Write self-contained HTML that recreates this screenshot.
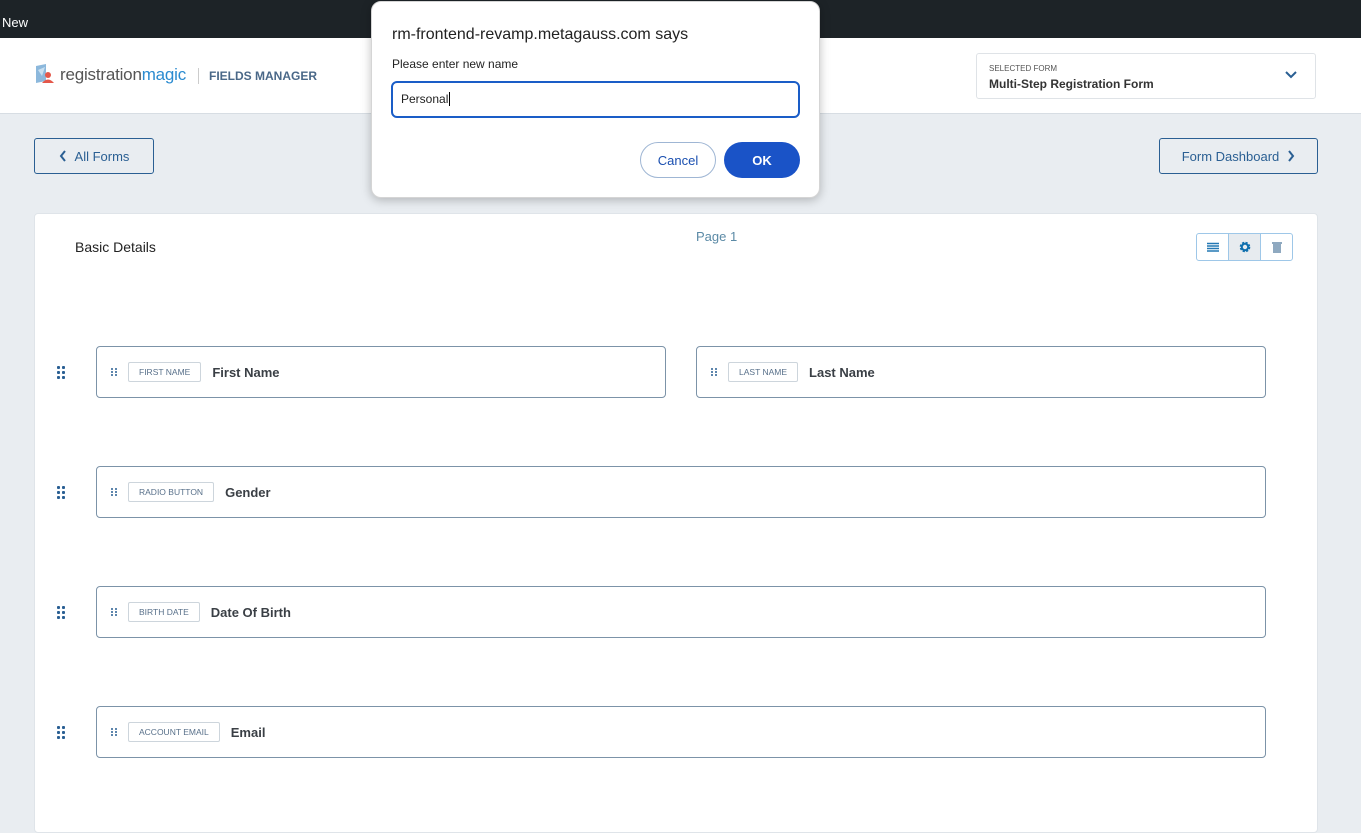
<!DOCTYPE html>
<html><head><style>
*{box-sizing:border-box;margin:0;padding:0}
body{width:1361px;height:797px;overflow:hidden;background:#e9edf1;font-family:"Liberation Sans",Arial,sans-serif;position:relative}
.top{position:absolute;left:0;top:0;width:1361px;height:38px;background:#1d2327;color:#fff;font-size:13px;padding:15px 0 0 2px}
.hdr{position:absolute;left:0;top:38px;width:1361px;height:76px;background:#fff;border-bottom:1px solid #d7dde3}
.btn{position:absolute;height:36px;border:1px solid #2a5f93;border-radius:3px;color:#2a5f93;font-size:13px;display:flex;align-items:center;justify-content:center;gap:8px}
.card{position:absolute;left:34px;top:213px;width:1284px;height:620px;background:#fff;border:1px solid #dfe4e9;border-radius:4px}
.field{position:absolute;height:52px;border:1px solid #7c93a8;border-radius:4px;background:#fff;display:flex;align-items:center}
.tag{border:1px solid #cdd5dc;color:#58708a;font-size:8.5px;height:20px;padding:0 10px;display:flex;align-items:center;margin-left:11px;border-radius:2px}
.fname{font-weight:bold;font-size:13px;color:#3a3f45;margin-left:11px}
.dots{display:grid;grid-template-columns:3px 3px;gap:2px 2px}
.dots i{width:3px;height:3px;background:#2a5f93;border-radius:1px;display:block}
.sd{margin-left:14px;gap:1px 2px;grid-template-columns:2px 2px}
.sd i{width:2px;height:2px}
.dlg{position:absolute;left:371px;top:1px;width:449px;height:197px;background:#fff;border-radius:10px;box-shadow:0 2px 10px rgba(0,0,0,.25);border:1px solid #d5d5d5}
</style></head><body>
<div class="top">New</div>
<div class="hdr">
 <svg style="position:absolute;left:36px;top:26px" width="18" height="20" viewBox="0 0 18 20"><path d="M0 2 L10 0 L10 17 L0 19Z" fill="#8cb8dc"/><path d="M2 6 L9 3 L6 12Z" fill="#c9e0f1"/><circle cx="12" cy="11" r="3" fill="#e4574a"/><path d="M6 19 Q12 12 18 19Z" fill="#e4574a"/></svg>
 <div style="position:absolute;left:60px;top:27px;font-size:17px;color:#555;letter-spacing:-.2px">registration<span style="color:#2b8bd0">magic</span></div>
 <div style="position:absolute;left:198px;top:30px;width:1px;height:16px;background:#ccc"></div>
 <div style="position:absolute;left:209px;top:31px;font-size:12px;font-weight:bold;color:#4a6888">FIELDS MANAGER</div>
 <div style="position:absolute;left:976px;top:15px;width:340px;height:46px;border:1px solid #dfe3e7;border-radius:3px">
  <div style="position:absolute;left:12px;top:10px;font-size:8px;color:#555">SELECTED FORM</div>
  <div style="position:absolute;left:12px;top:23px;font-size:12px;font-weight:bold;color:#333">Multi-Step Registration Form</div>
  <svg style="position:absolute;left:308px;top:17px" width="12" height="8" viewBox="0 0 12 8"><path d="M1 1 L6 6 L11 1" stroke="#2a5f93" stroke-width="2" fill="none"/></svg>
 </div>
</div>
<div class="btn" style="left:34px;top:138px;width:120px"><svg width="8" height="12" viewBox="0 0 8 12"><path d="M6 1 L2 6 L6 11" stroke="#2a5f93" stroke-width="2" fill="none"/></svg>All Forms</div>
<div class="btn" style="left:1159px;top:138px;width:159px">Form Dashboard<svg width="8" height="12" viewBox="0 0 8 12"><path d="M2 1 L6 6 L2 11" stroke="#2a5f93" stroke-width="2" fill="none"/></svg></div>
<div class="card">
 <div style="position:absolute;left:40px;top:25px;font-size:14px;color:#222">Basic Details</div>
 <div style="position:absolute;left:661px;top:15px;font-size:13px;color:#5b8aa6">Page 1</div>
 <div style="position:absolute;left:1161px;top:19px;width:97px;height:28px;border:1px solid #9ec7e8;border-radius:3px;display:flex">
  <div style="width:32px;border-right:1px solid #9ec7e8;display:flex;align-items:center;justify-content:center"><svg width="12" height="10"><path d="M0 1.5H12M0 4H12M0 6.5H12M0 9H12" stroke="#2478b4" stroke-width="1.4"/></svg></div>
  <div style="width:32px;border-right:1px solid #9ec7e8;background:#e7ebef;display:flex;align-items:center;justify-content:center"><svg width="12" height="12" viewBox="0 0 12 12"><circle cx="6" cy="6" r="4" fill="none" stroke="#0f6fae" stroke-width="2.6" stroke-dasharray="2 1.2"/><circle cx="6" cy="6" r="3.2" fill="none" stroke="#0f6fae" stroke-width="2"/></svg></div>
  <div style="flex:1;display:flex;align-items:center;justify-content:center"><svg width="10" height="12"><rect x="0" y="1" width="10" height="2" fill="#8fa9c0"/><rect x="1" y="3" width="8" height="9" fill="#8fa9c0"/></svg></div>
 </div>
</div>
<div style="position:absolute;left:57px;top:366px" class="dots"><i></i><i></i><i></i><i></i><i></i><i></i></div>
<div class="field" style="left:96px;top:346px;width:570px"><div class="dots sd"><i></i><i></i><i></i><i></i><i></i><i></i></div><div class="tag">FIRST NAME</div><div class="fname">First Name</div></div>
<div class="field" style="left:696px;top:346px;width:570px"><div class="dots sd"><i></i><i></i><i></i><i></i><i></i><i></i></div><div class="tag">LAST NAME</div><div class="fname">Last Name</div></div>
<div style="position:absolute;left:57px;top:486px" class="dots"><i></i><i></i><i></i><i></i><i></i><i></i></div>
<div class="field" style="left:96px;top:466px;width:1170px"><div class="dots sd"><i></i><i></i><i></i><i></i><i></i><i></i></div><div class="tag">RADIO BUTTON</div><div class="fname">Gender</div></div>
<div style="position:absolute;left:57px;top:606px" class="dots"><i></i><i></i><i></i><i></i><i></i><i></i></div>
<div class="field" style="left:96px;top:586px;width:1170px"><div class="dots sd"><i></i><i></i><i></i><i></i><i></i><i></i></div><div class="tag">BIRTH DATE</div><div class="fname">Date Of Birth</div></div>
<div style="position:absolute;left:57px;top:726px" class="dots"><i></i><i></i><i></i><i></i><i></i><i></i></div>
<div class="field" style="left:96px;top:706px;width:1170px"><div class="dots sd"><i></i><i></i><i></i><i></i><i></i><i></i></div><div class="tag">ACCOUNT EMAIL</div><div class="fname">Email</div></div>
<div class="dlg">
 <div style="position:absolute;left:20px;top:24px;font-size:16px;color:#222">rm-frontend-revamp.metagauss.com says</div>
 <div style="position:absolute;left:20px;top:55px;font-size:12px;color:#222">Please enter new name</div>
 <div style="position:absolute;left:19px;top:79px;width:409px;height:37px;border:2px solid #1a5dc7;border-radius:6px;font-size:12px;color:#222;padding:9px 8px">Personal<span style="border-left:1px solid #000;margin-left:1px"></span></div>
 <div style="position:absolute;left:268px;top:140px;width:76px;height:36px;border:1px solid #9fb6d4;border-radius:18px;color:#1a4fb0;font-size:13px;display:flex;align-items:center;justify-content:center">Cancel</div>
 <div style="position:absolute;left:352px;top:140px;width:76px;height:36px;background:#1a53c7;border-radius:18px;color:#fff;font-size:13px;font-weight:bold;display:flex;align-items:center;justify-content:center">OK</div>
</div>
</body></html>
